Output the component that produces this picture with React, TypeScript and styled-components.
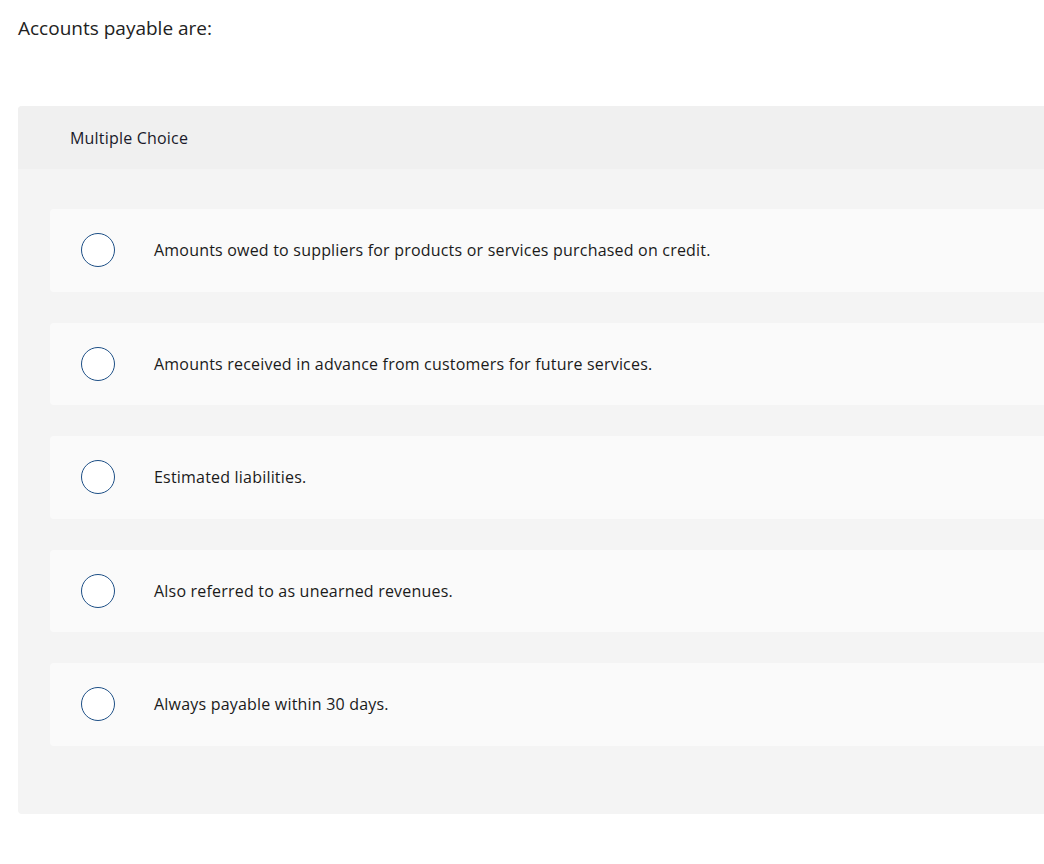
import React from 'react'
import styled, { createGlobalStyle } from 'styled-components'

const GlobalStyle = createGlobalStyle`
    html, body {
        margin: 0;
        padding: 0;
        background: #fff;
    }
    body {
        font-family: 'Open Sans', 'Liberation Sans', sans-serif;
        color: #1a1a1a;
    }
`

const choices = [
    'Amounts owed to suppliers for products or services purchased on credit.',
    'Amounts received in advance from customers for future services.',
    'Estimated liabilities.',
    'Also referred to as unearned revenues.',
    'Always payable within 30 days.',
]

export default function App() {
    return (
        <>
            <GlobalStyle />
            <Page>
                <Question>Accounts payable are:</Question>
                <Panel>
                    <PanelHeader>Multiple Choice</PanelHeader>
                    <ChoiceList>
                        {choices.map((text, index) => (
                            <Choice key={index}>
                                <Radio />
                                <ChoiceText>{text}</ChoiceText>
                            </Choice>
                        ))}
                    </ChoiceList>
                </Panel>
            </Page>
        </>
    )
}

// panel runs off the right edge in the screenshot, so clip it here
const Page = styled.div`
    padding: 16px 0 40px 18px;
    overflow: hidden;
`

const Question = styled.div`
    font-size: 19px;
    line-height: 24px;
    color: #222;
    margin-bottom: 66px;
`

const Panel = styled.div`
    width: calc(100% + 40px);
    background: #f4f4f4;
    border-radius: 4px;
    overflow: hidden;
`

const PanelHeader = styled.div`
    background: #f0f0f0;
    height: 63px;
    display: flex;
    align-items: center;
    padding-left: 52px;
    font-size: 16px;
    letter-spacing: 0.2px;
    color: #1a1a2a;
`

const ChoiceList = styled.div`
    display: flex;
    flex-direction: column;
    gap: 31px;
    padding: 40px 0 68px 32px;
`

const Choice = styled.div`
    background: #fafafa;
    border-radius: 4px;
    height: 82.5px;
    display: flex;
    align-items: center;
    padding-left: 31px;
    gap: 39px;
`

const Radio = styled.span`
    box-sizing: border-box;
    width: 34px;
    height: 34px;
    border-radius: 50%;
    border: 1.5px solid #1d4f86;
    background: #fff;
    flex-shrink: 0;
`

const ChoiceText = styled.span`
    font-size: 16px;
    letter-spacing: 0.2px;
    color: #1a1a1a;
`
